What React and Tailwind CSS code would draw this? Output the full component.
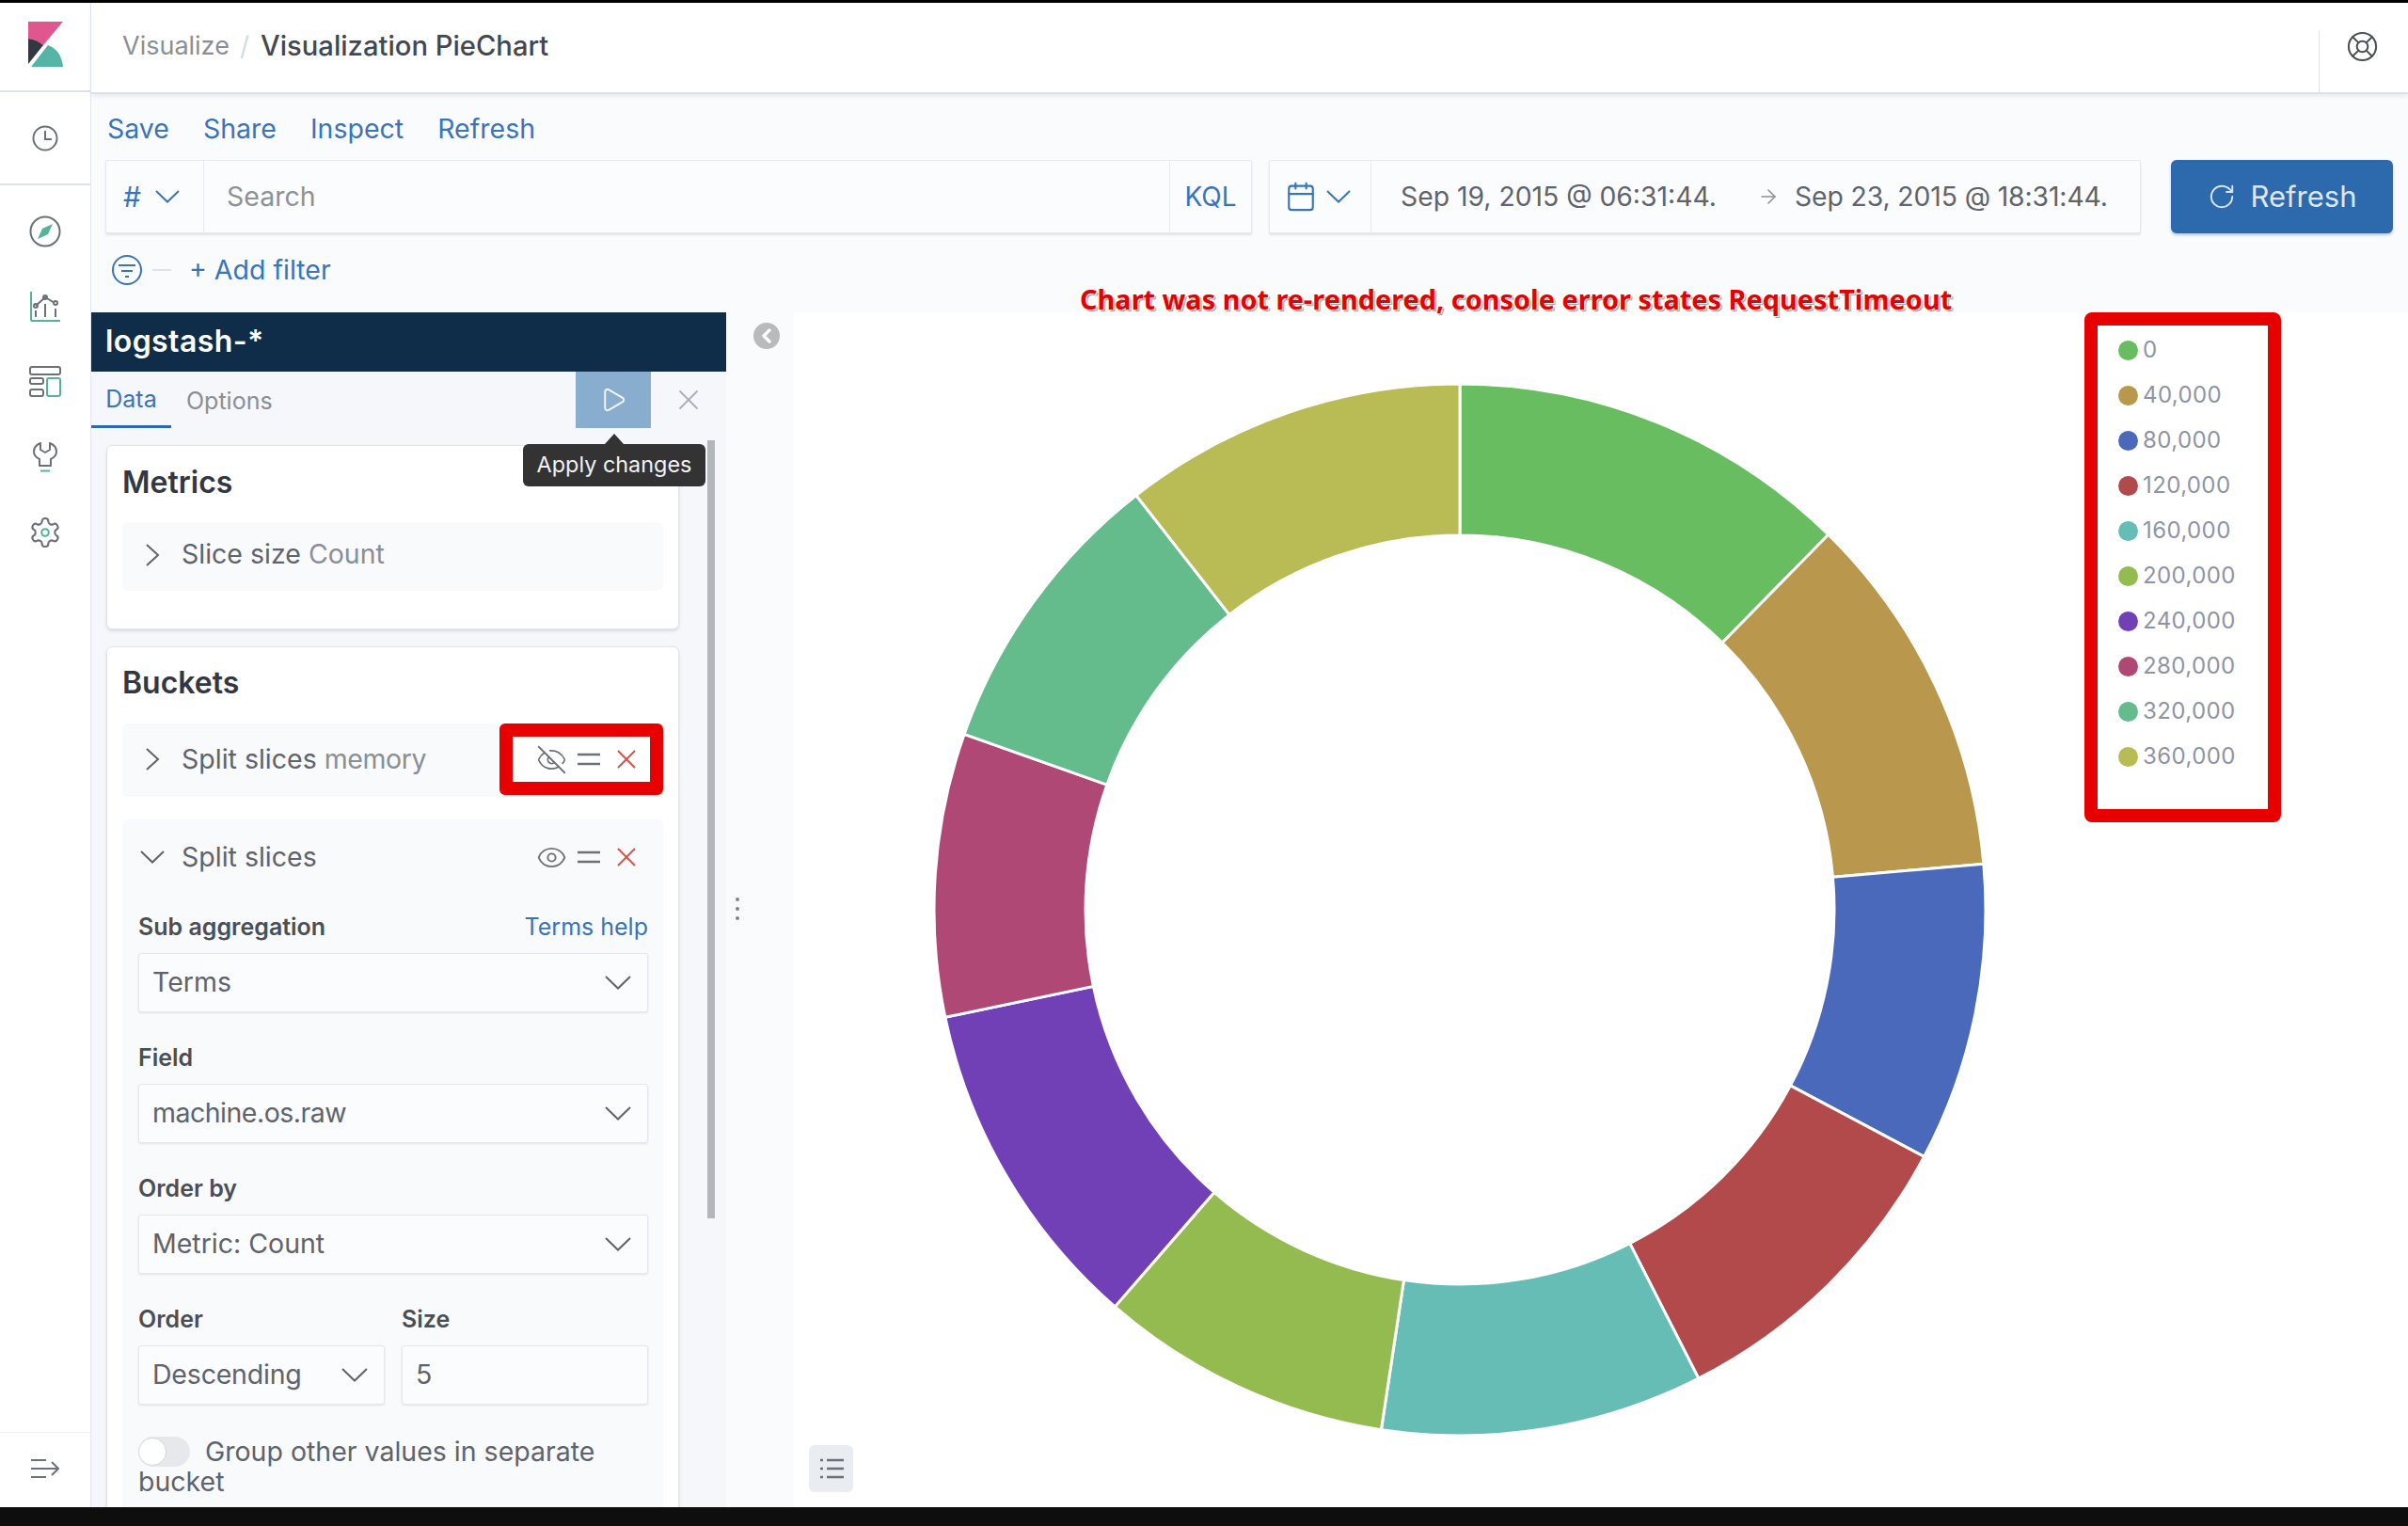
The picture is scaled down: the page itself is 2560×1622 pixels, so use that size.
import React from "react";
import { X, Eye, EyeOff, ArrowRight, RotateCw, LifeBuoy, Calendar, Play } from "lucide-react";

const SLICES = [
  { value: "0", color: "#69bd61", from: 0, to: 44.5 },
  { value: "40,000", color: "#b9974d", from: 44.5, to: 85 },
  { value: "80,000", color: "#4a69ba", from: 85, to: 118 },
  { value: "120,000", color: "#b24a4b", from: 118, to: 153 },
  { value: "160,000", color: "#66bdb6", from: 153, to: 188.6 },
  { value: "200,000", color: "#94bb50", from: 188.6, to: 221 },
  { value: "240,000", color: "#7140b6", from: 221, to: 258.2 },
  { value: "280,000", color: "#b04875", from: 258.2, to: 289.5 },
  { value: "320,000", color: "#64bb8b", from: 289.5, to: 322 },
  { value: "360,000", color: "#b9bc55", from: 322, to: 360 },
];

function arc(from, to, R, r) {
  const pt = (a, d) => {
    const t = (a * Math.PI) / 180;
    return `${(d * Math.sin(t)).toFixed(2)} ${(-d * Math.cos(t)).toFixed(2)}`;
  };
  return `M${pt(from, R)} A${R} ${R} 0 0 1 ${pt(to, R)} L${pt(to, r)} A${r} ${r} 0 0 0 ${pt(from, r)} Z`;
}

const FONT = "font-['Inter','Liberation_Sans',sans-serif]";
const DARK = "#6b7079";
const TEAL = "#54b399";

function Logo() {
  return (
    <svg width="37" height="49" viewBox="0 0 37 49">
      <path d="M0 0H37L16 25Q9 19 0 18Z" fill="#e0568f" />
      <path d="M0 18Q9 19 16 25L0 45Z" fill="#343741" />
      <path d="M3 48L21 25Q35 30 37 48Z" fill="#54b5a6" />
    </svg>
  );
}

function ClockIcon() {
  return (
    <svg width="28" height="28" viewBox="0 0 28 28" fill="none" stroke={DARK} strokeWidth="2">
      <circle cx="14" cy="14" r="12.5" />
      <path d="M14 6V15H21" />
    </svg>
  );
}
function CompassIcon() {
  return (
    <svg width="34" height="34" viewBox="0 0 34 34" fill="none">
      <circle cx="17" cy="17" r="15.5" stroke={DARK} strokeWidth="2" />
      <path d="M25 9L20 20L9 25L14 14Z" fill={TEAL} />
    </svg>
  );
}
function ChartIcon() {
  return (
    <svg width="34" height="34" viewBox="0 0 34 34" fill="none" strokeWidth="2">
      <path d="M2 1V31Q2 32 3 32H33" stroke={TEAL} />
      <path d="M7 16L17 7L27 13" stroke={DARK} />
      <circle cx="7" cy="16" r="2" stroke={DARK} />
      <circle cx="17" cy="7" r="2" stroke={DARK} />
      <circle cx="28" cy="13" r="2" stroke={DARK} />
      <path d="M7 21V28M17 14V28M28 19V28" stroke={DARK} />
    </svg>
  );
}
function DashIcon() {
  return (
    <svg width="34" height="34" viewBox="0 0 34 34" fill="none" strokeWidth="2">
      <rect x="1" y="1" width="32" height="8" rx="2" stroke={DARK} />
      <rect x="1" y="13" width="14" height="6" rx="2" stroke={DARK} />
      <rect x="1" y="25" width="14" height="7" rx="2" stroke={DARK} />
      <rect x="19" y="13" width="14" height="19" rx="2" stroke={TEAL} />
    </svg>
  );
}
function WrenchIcon() {
  return (
    <svg width="26" height="32" viewBox="0 0 26 32" fill="none" strokeWidth="2">
      <path d="M8 1C3 3 1 7 1 10C1 14 3 16 7 18V25H19V18C23 16 25 14 25 10C25 7 23 3 18 1V8L13 11L8 8Z" stroke={DARK} strokeLinejoin="round" />
      <path d="M8 30.5H18" stroke={TEAL} />
    </svg>
  );
}
function GearIcon() {
  return (
    <svg width="36" height="36" viewBox="0 0 24 24" fill="none" strokeWidth="1.4">
      <path
        d="M12.22 2h-.44a2 2 0 0 0-2 2v.18a2 2 0 0 1-1 1.73l-.43.25a2 2 0 0 1-2 0l-.15-.08a2 2 0 0 0-2.73.73l-.22.38a2 2 0 0 0 .73 2.73l.15.1a2 2 0 0 1 1 1.72v.51a2 2 0 0 1-1 1.74l-.15.09a2 2 0 0 0-.73 2.73l.22.38a2 2 0 0 0 2.73.73l.15-.08a2 2 0 0 1 2 0l.43.25a2 2 0 0 1 1 1.73V20a2 2 0 0 0 2 2h.44a2 2 0 0 0 2-2v-.18a2 2 0 0 1 1-1.73l.43-.25a2 2 0 0 1 2 0l.15.08a2 2 0 0 0 2.73-.73l.22-.39a2 2 0 0 0-.73-2.73l-.15-.08a2 2 0 0 1-1-1.74v-.5a2 2 0 0 1 1-1.74l.15-.09a2 2 0 0 0 .73-2.73l-.22-.38a2 2 0 0 0-2.73-.73l-.15.08a2 2 0 0 1-2 0l-.43-.25a2 2 0 0 1-1-1.73V4a2 2 0 0 0-2-2z"
        stroke={DARK}
      />
      <circle cx="12" cy="12" r="2.5" stroke={TEAL} />
    </svg>
  );
}
function ExpandIcon() {
  return (
    <svg width="30" height="22" viewBox="0 0 30 22" fill="none" stroke={DARK} strokeWidth="2">
      <path d="M0 2H16M0 11H28M0 20H16M22 4L29 11L22 18" />
    </svg>
  );
}
function FilterIcon() {
  return (
    <svg width="34" height="32" viewBox="0 0 34 32" fill="none" stroke="#3a74b8" strokeWidth="2">
      <circle cx="17" cy="16" r="15" />
      <path d="M8 11H26M11 17H23M15 23H19" />
    </svg>
  );
}
function ListIcon() {
  return (
    <svg width="26" height="22" viewBox="0 0 26 22" fill="none" stroke={DARK} strokeWidth="2.5">
      <path d="M1 2H4M8 2H26M1 11H4M8 11H26M1 20H4M8 20H26" />
    </svg>
  );
}
function EqualsIcon() {
  return (
    <svg width="26" height="14" viewBox="0 0 26 14" fill="none" stroke={DARK} strokeWidth="2.5">
      <path d="M1 2H25M1 12H25" />
    </svg>
  );
}
function ChevDown({ w = 26, h = 14, color = "currentColor" }) {
  return (
    <svg width={w} height={h} viewBox={`0 0 ${w} ${h}`} fill="none" stroke={color} strokeWidth="2">
      <path d={`M1 1L${w / 2} ${h - 1.5}L${w - 1} 1`} />
    </svg>
  );
}
function ChevRight() {
  return (
    <svg width="16" height="24" viewBox="0 0 16 24" fill="none" stroke="#5e636c" strokeWidth="2">
      <path d="M2 1L14 12L2 23" />
    </svg>
  );
}

function RowIcons({ off }) {
  return (
    <div className="flex items-center">
      <span className="flex w-[40px] justify-center">
        {off ? <EyeOff size={33} strokeWidth={1.3} color={DARK} /> : <Eye size={33} strokeWidth={1.4} color={DARK} />}
      </span>
      <span className="flex w-[40px] justify-center">
        <EqualsIcon />
      </span>
      <span className="flex w-[40px] justify-center">
        <X size={34} strokeWidth={1.4} color="#d2554d" />
      </span>
    </div>
  );
}

function Label({ children, right }) {
  return (
    <div className="mb-[12px] flex h-[30px] items-center justify-between text-[25px] font-semibold text-[#4a4e57]">
      <span>{children}</span>
      {right && <span className="font-normal text-[#3a74b8]">{right}</span>}
    </div>
  );
}

function SelectBox({ value, arrow = true, valueClass = "" }) {
  return (
    <div className="flex h-[63px] items-center justify-between rounded-[3px] border border-[#e4e8ee] bg-[#fbfcfd] pl-[14px] pr-[17px] text-[28.5px] text-[#5e636c] shadow-[0_1px_2px_rgba(152,162,179,0.25)]">
      <span className={valueClass}>{value}</span>
      {arrow && <ChevDown w={28} h={15} color="#5e636c" />}
    </div>
  );
}

export default function App() {
  return (
    <div className={`flex h-[1622px] w-[2560px] flex-col overflow-hidden bg-[#0e0e0e] ${FONT}`}>
      <div className="h-[3px] shrink-0 bg-black" />
      <div className="flex min-h-0 flex-1">
        <aside className="flex w-[97px] shrink-0 flex-col border-r border-[#e3e7ee] bg-white">
          <div className="flex h-[95px] shrink-0 items-start justify-start border-b-2 border-[#dce1ea] pl-[30px] pt-[20px]">
            <Logo />
          </div>
          <div className="flex h-[99px] shrink-0 items-center justify-center border-b-2 border-[#dce1ea]">
            <ClockIcon />
          </div>
          <div className="flex flex-1 flex-col pt-[9px]">
            <div className="flex h-[80px] items-center justify-center"><CompassIcon /></div>
            <div className="flex h-[80px] items-center justify-center"><ChartIcon /></div>
            <div className="flex h-[80px] items-center justify-center"><DashIcon /></div>
            <div className="flex h-[80px] items-center justify-center"><WrenchIcon /></div>
            <div className="flex h-[80px] items-center justify-center"><GearIcon /></div>
          </div>
          <div className="flex h-[80px] shrink-0 items-center justify-center border-t border-[#eef0f4] pb-[3px]">
            <ExpandIcon />
          </div>
        </aside>

        <main className="relative flex min-w-0 flex-1 flex-col bg-[#fafbfd]">
          <header className="flex h-[97px] shrink-0 items-stretch border-b-2 border-[#dce1ea] bg-white shadow-[0_2px_4px_rgba(152,162,179,0.2)]">
            <div className="flex flex-1 items-center pb-[3px] pl-[33px]">
              <span className="text-[27px] text-[#8a8e96]">Visualize</span>
              <span className="ml-[11px] mr-[12px] text-[28px] text-[#d3dae6]">/</span>
              <span className="text-[29.2px] font-medium text-[#434750]">Visualization PieChart</span>
            </div>
            <div className="mt-[30px] flex w-[95px] justify-center border-l border-[#dce1ea]">
              <span className="-mt-[1px] ml-[-4px]">
                <LifeBuoy size={35} strokeWidth={1.4} color="#4a4e57" />
              </span>
            </div>
          </header>

          <nav className="flex h-[70px] shrink-0 items-center gap-[36px] pl-[17px] pt-[4px] text-[28.5px] text-[#3a74b8]">
            <span>Save</span>
            <span>Share</span>
            <span>Inspect</span>
            <span>Refresh</span>
          </nav>

          <div className="flex h-[78px] shrink-0 items-stretch pl-[15px] pr-[16px]">
            <div className="flex w-[1219px] items-stretch rounded-[2px] border border-[#e6e9ef] bg-[#fbfcfd] shadow-[0_2px_2px_rgba(152,162,179,0.25)]">
              <div className="flex w-[104px] items-center gap-[15px] border-r border-[#e6e9ef] pl-[18px] text-[30px] text-[#3a74b8]">
                <span>#</span>
                <ChevDown />
              </div>
              <div className="flex flex-1 items-center pl-[24px] text-[28.5px] text-[#8d9199]">Search</div>
              <div className="flex w-[87px] items-center justify-center border-l border-[#e6e9ef] text-[28px] text-[#3a74b8]">KQL</div>
            </div>
            <div className="ml-[18px] flex w-[927px] items-stretch rounded-[2px] border border-[#e6e9ef] bg-[#fbfcfd] shadow-[0_2px_2px_rgba(152,162,179,0.25)]">
              <div className="flex w-[108px] items-center gap-[10px] border-r border-[#e6e9ef] pl-[16px] text-[#3a74b8]">
                <Calendar size={34} strokeWidth={1.5} />
                <ChevDown />
              </div>
              <div className="flex flex-1 items-center pl-[31px] text-[28.3px] text-[#5e636c]">
                <span className="w-[379px]">Sep 19, 2015 @ 06:31:44.</span>
                <ArrowRight size={24} strokeWidth={1.5} color="#8a8e96" />
                <span className="ml-[16px] tracking-[-0.1px]">Sep 23, 2015 @ 18:31:44.</span>
              </div>
            </div>
            <div className="ml-[32px] flex w-[236px] items-center justify-center gap-[16px] rounded-[6px] bg-[#2c6aad] text-[31px] text-[#dce6f2] shadow-[0_2px_3px_rgba(44,106,173,0.35)]">
              <RotateCw size={30} strokeWidth={1.5} />
              <span>Refresh</span>
            </div>
          </div>

          <div className="flex h-[84px] shrink-0 items-center pb-[6px] pl-[21px]">
            <FilterIcon />
            <span className="ml-[10px] h-[2px] w-[20px] bg-[#dfe2e8]" />
            <span className="ml-[19px] text-[28.5px] text-[#3a74b8]">+ Add filter</span>
          </div>

          <div className="flex min-h-0 flex-1 overflow-hidden">
            <section className="relative flex w-[675px] shrink-0 flex-col overflow-hidden bg-[#f5f7fa]">
              <div className="flex h-[63px] shrink-0 items-center bg-[#0f2c49] pb-[2px] pl-[15px] text-[32px] font-semibold tracking-[0.4px] text-white">logstash-*</div>
              <div className="flex h-[60px] shrink-0 items-stretch">
                <div className="flex w-[85px] items-center justify-center border-b-[3px] border-[#2c6aad] pt-[3px] text-[25px] text-[#3a74b8]">Data</div>
                <div className="ml-[16px] flex items-center pt-[3px] text-[25px] text-[#8a8e96]">Options</div>
                <div className="ml-auto flex w-[80px] items-center justify-center bg-[#88adcf] text-[#f5f7fa]">
                  <Play size={30} strokeWidth={1.5} />
                </div>
                <div className="flex w-[80px] items-center justify-center text-[#a9adb5]">
                  <X size={36} strokeWidth={1.2} />
                </div>
              </div>

              <div className="flex w-[625px] flex-col gap-[18px] pl-[16px] pt-[18px]">
                <div className="h-[196px] shrink-0 rounded-[6px] border border-[#e0e4eb] bg-white px-[16px] pt-[21px] shadow-[0_2px_3px_rgba(152,162,179,0.3)]">
                  <h2 className="flex h-[36px] items-center text-[32px] font-semibold text-[#343741]">Metrics</h2>
                  <div className="mt-[24px] flex h-[73px] items-center rounded-[6px] bg-[#f9fafc] pb-[4px] pl-[24px] text-[28.5px] text-[#5e636c]">
                    <ChevRight />
                    <span className="ml-[23px]">Slice size</span>
                    <span className="ml-[8px] text-[#8a8e96]">Count</span>
                  </div>
                </div>

                <div className="shrink-0 rounded-[6px] border border-[#e0e4eb] bg-white px-[16px] pt-[20px] shadow-[0_2px_3px_rgba(152,162,179,0.3)]">
                  <h2 className="flex h-[36px] items-center text-[32px] font-semibold text-[#343741]">Buckets</h2>
                  <div className="mt-[25px] flex h-[78px] items-start justify-between rounded-[6px] bg-[#f9fafc] pl-[24px] text-[28.5px] text-[#5e636c]">
                    <div className="flex h-[76px] items-center">
                      <ChevRight />
                      <span className="ml-[23px]">Split slices</span>
                      <span className="ml-[8px] tracking-[-0.4px] text-[#8a8e96]">memory</span>
                    </div>
                    <div className="flex h-[76px] w-[174px] items-center rounded-[6px] border-[14px] border-[#e60000] bg-white pl-[21px]">
                      <RowIcons off />
                    </div>
                  </div>
                  <div className="mt-[24px] rounded-[6px] bg-[#f9fafc] pb-[60px] pl-[17px] pr-[16px]">
                    <div className="flex h-[80px] items-center justify-between pr-[3px] text-[28.5px] text-[#5e636c]">
                      <div className="flex items-center pl-[2px]">
                        <ChevDown w={26} h={14} color="#5e636c" />
                        <span className="ml-[18px]">Split slices</span>
                      </div>
                      <RowIcons />
                    </div>
                    <div className="mt-[20px] flex flex-col gap-[34px]">
                      <div>
                        <Label right="Terms help">Sub aggregation</Label>
                        <SelectBox value="Terms" />
                      </div>
                      <div>
                        <Label>Field</Label>
                        <SelectBox value="machine.os.raw" valueClass="tracking-[-0.5px]" />
                      </div>
                      <div>
                        <Label>Order by</Label>
                        <SelectBox value="Metric: Count" />
                      </div>
                      <div className="flex gap-[18px]">
                        <div className="w-[262px]">
                          <Label>Order</Label>
                          <SelectBox value="Descending" valueClass="tracking-[-0.2px]" />
                        </div>
                        <div className="w-[262px]">
                          <Label>Size</Label>
                          <SelectBox value="5" arrow={false} />
                        </div>
                      </div>
                      <p className="text-[28.5px] leading-[32px] text-[#5e636c]">
                        <span className="mr-[16px] inline-flex h-[32px] w-[55px] items-center rounded-full bg-[#e6e8ec] align-top">
                          <span className="h-[30px] w-[30px] rounded-full border border-[#d5d8de] bg-white" />
                        </span>
                        Group other values in separate bucket
                      </p>
                    </div>
                  </div>
                </div>
              </div>

              <div className="absolute left-[655px] top-[136px] h-[827px] w-[8px] bg-[#b3b6bb]" />
              <div className="absolute left-[459px] top-[129px] flex flex-col items-center">
                <div className="h-0 w-0 border-x-[10px] border-b-[11px] border-x-transparent border-b-[#333333]" />
                <div className="flex h-[45px] w-[194px] items-center justify-center rounded-[6px] bg-[#333333] pb-[2px] text-[23.4px] text-[#f2f2f2]">Apply changes</div>
              </div>
            </section>

            <div className="flex w-[72px] shrink-0 flex-col items-center pt-[11px]">
              <span className="ml-[13px] flex h-[28px] w-[28px] items-center justify-center rounded-full bg-[#b9babd] text-white">
                <svg width="14" height="16" viewBox="0 0 14 16" fill="none" stroke="currentColor" strokeWidth="3.4" strokeLinecap="round" strokeLinejoin="round">
                  <path d="M10 2L4 8L10 14" />
                </svg>
              </span>
              <div className="ml-[-48px] mt-[583px] flex flex-col gap-[6px]">
                <span className="h-[4px] w-[4px] rounded-full bg-[#7c8087]" />
                <span className="h-[4px] w-[4px] rounded-full bg-[#7c8087]" />
                <span className="h-[4px] w-[4px] rounded-full bg-[#7c8087]" />
              </div>
            </div>

            <section className="relative flex min-w-0 flex-1 bg-white">
              <div className="flex w-[1416px] shrink-0 items-center justify-center">
                <svg width="1122" height="1122" viewBox="-561 -561 1122 1122">
                  {SLICES.map((s) => (
                    <path key={s.value} d={arc(s.from, s.to, 559, 398)} fill={s.color} stroke="#ffffff" strokeWidth="3" />
                  ))}
                </svg>
              </div>
              <div className="-ml-[8px] w-[308px] shrink-0 pt-[16px]">
                {SLICES.map((s) => (
                  <div key={s.value} className="flex h-[48px] items-center gap-[5px] text-[24px] tracking-[0.4px] text-[#8f94a3]">
                    <span className="h-[21px] w-[21px] rounded-full" style={{ backgroundColor: s.color }} />
                    <span>{s.value}</span>
                  </div>
                ))}
              </div>
              <div className="pointer-events-none absolute left-[1372px] top-0 h-[542px] w-[209px] rounded-[8px] border-[14px] border-[#e60000]" />
              <div className="absolute bottom-[16px] left-[16px] flex h-[50px] w-[47px] items-center justify-center rounded-[6px] bg-[#e9ecf0]">
                <ListIcon />
              </div>
            </section>
          </div>

          <div className="absolute left-[1051px] top-[295px] whitespace-nowrap font-['Noto_Sans','Open_Sans',sans-serif] text-[28.9px] font-bold leading-[40px] text-[#e60000] [text-shadow:1px_1px_0_#ffffff,2px_2px_1px_#999999]">
            Chart was not re-rendered, console error states RequestTimeout
          </div>
        </main>
      </div>
      <div className="h-[20px] shrink-0 bg-[#0e0e0e]" />
    </div>
  );
}
